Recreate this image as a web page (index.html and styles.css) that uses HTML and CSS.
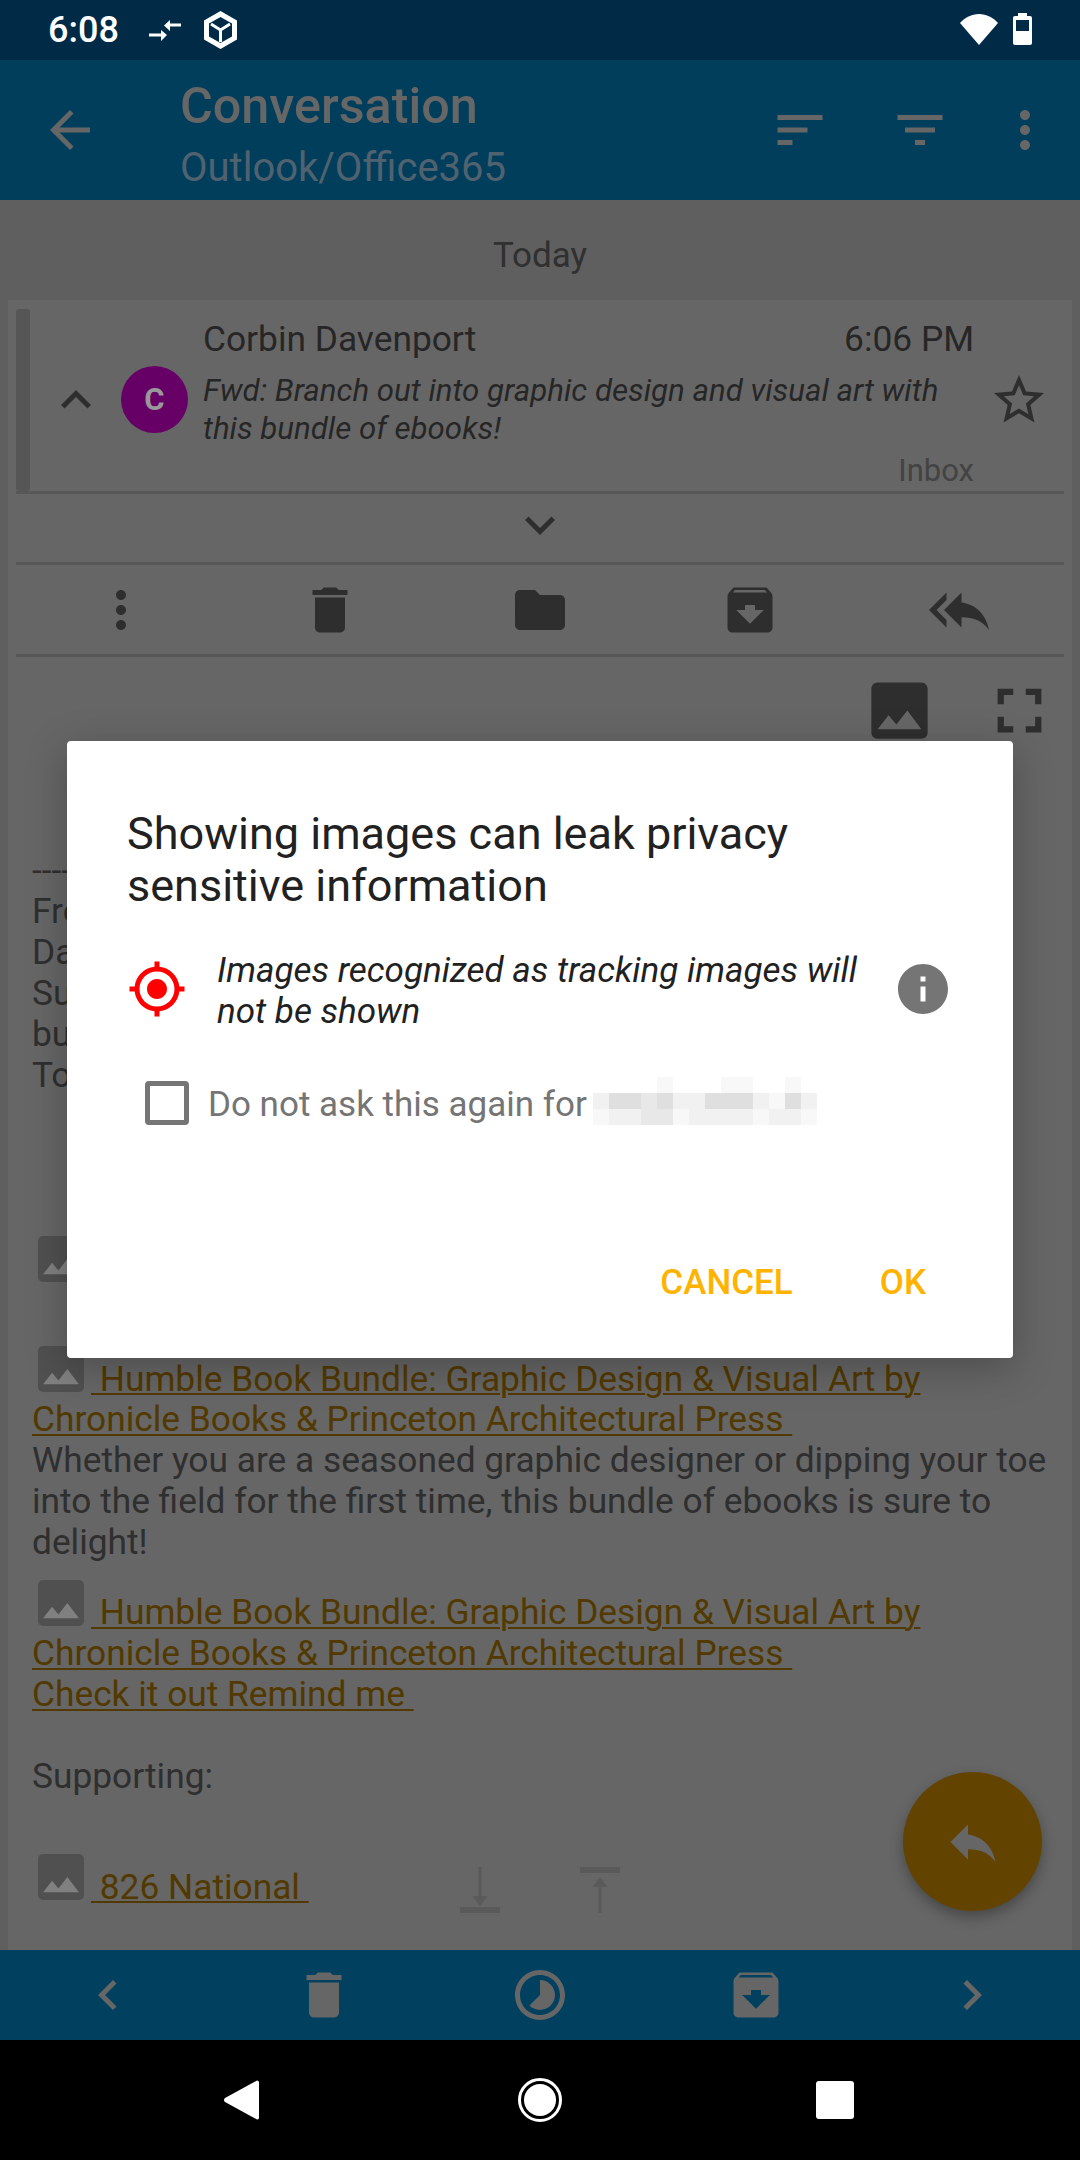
FILE: index.html
```html
<!DOCTYPE html>
<html lang="en">
<head>
  <meta charset="UTF-8">
  <meta name="viewport" content="width=device-width, initial-scale=1.0">
  <title>Conversation</title>
  <link rel="stylesheet" href="styles.css">
</head>
<body>

  <div class="screen">

    <div class="status-bar">
      <span class="clock">6:08</span>
      <svg class="st-arrows" viewBox="0 0 32 21"><path d="M0 13.500h12V10l6 5-6 6v-4.500H0zM32 3.500H21V0l-6 5.500 6 5.500V6.500h11z"/></svg>
      <svg class="st-hex" viewBox="0 0 33 38"><path d="M16.500 0L33 9.500v19L16.500 38 0 28.500v-19z"/><path class="hole" d="M16.500 6L28 12.500v13L16.500 32 5 25.500v-13z"/><path class="hex-lines" d="M7 13l9.500 6L26 13M16.500 19v12"/></svg>
      <span class="status-gap"></span>
      <svg class="st-wifi" viewBox="0 0 38 31"><path d="M19 31L0 9C5 3.500 11.500 0 19 0s14 3.500 19 9z"/></svg>
      <svg class="st-battery" viewBox="0 0 19 32"><path fill-rule="evenodd" d="M5 0h9v3h3a2 2 0 0 1 2 2v25a2 2 0 0 1-2 2H2a2 2 0 0 1-2-2V5a2 2 0 0 1 2-2h3zM3 7v11h13V7z"/></svg>
    </div>

    <div class="toolbar">
      <svg class="ico back" viewBox="0 0 24 24"><path d="M20 11H7.830l5.590-5.590L12 4l-8 8 8 8 1.410-1.410L7.830 13H20v-2z"/></svg>
      <div class="toolbar-title">
        <div class="title">Conversation</div>
        <div class="subtitle">Outlook/Office365</div>
      </div>
      <svg class="ico tb-sort" viewBox="0 0 24 24"><path d="M3 18h6v-2H3v2zM3 6v2h18V6H3zm0 7h12v-2H3v2z"/></svg>
      <svg class="ico tb-filter" viewBox="0 0 24 24"><path d="M10 18h4v-2h-4v2zM3 6v2h18V6H3zm3 7h12v-2H6v2z"/></svg>
      <svg class="ico tb-more" viewBox="0 0 24 24"><path d="M12 8c1.100 0 2-.9 2-2s-.9-2-2-2-2 .9-2 2 .9 2 2 2zm0 2c-1.100 0-2 .9-2 2s.9 2 2 2 2-.9 2-2-.9-2-2-2zm0 6c-1.100 0-2 .9-2 2s.9 2 2 2 2-.9 2-2-.9-2-2-2z"/></svg>
    </div>

    <div class="main">
      <div class="day">Today</div>

      <div class="card">
        <div class="msg-head">
          <div class="stripe"></div>
          <svg class="ico dark collapse" viewBox="0 0 24 24"><path d="M12 8l-6 6 1.410 1.410L12 10.830l4.590 4.580L18 14z"/></svg>
          <div class="avatar">C</div>
          <div class="msg-info">
            <div class="msg-top">
              <span class="sender">Corbin Davenport</span>
              <span class="time">6:06 PM</span>
            </div>
            <div class="subject">Fwd: Branch out into graphic design and visual art with this bundle of ebooks!</div>
            <div class="folder-name">Inbox</div>
          </div>
          <svg class="ico dark star" viewBox="0 0 24 24"><path d="M22 9.240l-7.190-.62L12 2 9.190 8.630 2 9.240l5.460 4.730L5.820 21 12 17.270 18.180 21l-1.630-7.030L22 9.240zM12 15.400l-3.760 2.270 1-4.280-3.320-2.880 4.380-.38L12 6.100l1.710 4.040 4.380.38-3.320 2.880 1 4.280L12 15.400z"/></svg>
        </div>
        <div class="divider"></div>

        <div class="expand-row">
          <svg class="ico dark" viewBox="0 0 24 24"><path d="M16.590 8.590L12 13.170 7.410 8.590 6 10l6 6 6-6z"/></svg>
        </div>
        <div class="divider"></div>

        <div class="action-row">
          <svg class="ico dark" viewBox="0 0 24 24"><path d="M12 8c1.100 0 2-.9 2-2s-.9-2-2-2-2 .9-2 2 .9 2 2 2zm0 2c-1.100 0-2 .9-2 2s.9 2 2 2 2-.9 2-2-.9-2-2-2zm0 6c-1.100 0-2 .9-2 2s.9 2 2 2 2-.9 2-2-.9-2-2-2z"/></svg>
          <svg class="ico dark" viewBox="0 0 24 24"><path d="M6 19c0 1.100.9 2 2 2h8c1.100 0 2-.9 2-2V7H6v12zM19 4h-3.500l-1-1h-5l-1 1H5v2h14V4z"/></svg>
          <svg class="ico dark" viewBox="0 0 24 24"><path d="M10 4H4c-1.100 0-1.990.9-1.990 2L2 18c0 1.100.9 2 2 2h16c1.100 0 2-.9 2-2V8c0-1.100-.9-2-2-2h-8l-2-2z"/></svg>
          <svg class="ico dark" viewBox="0 0 24 24"><path d="M20.540 5.230l-1.390-1.680C18.880 3.210 18.470 3 18 3H6c-.47 0-.88.21-1.160.55L3.460 5.230C3.170 5.570 3 6.020 3 6.500V19c0 1.100.9 2 2 2h14c1.100 0 2-.9 2-2V6.500c0-.48-.17-.93-.46-1.270zM12 17.500L6.500 12H10v-2h4v2h3.500L12 17.500zM5.120 5l.81-1h12l.94 1H5.120z"/></svg>
          <svg class="ico dark" viewBox="0 0 24 24"><path d="M7 8V5l-7 7 7 7v-3l-4-4 4-4zm6 1V5l-7 7 7 7v-4.100c5 0 8.500 1.600 11 5.100-1-5-4-10-11-11z"/></svg>
        </div>
        <div class="divider"></div>

        <div class="image-row">
          <svg class="ico dark big" viewBox="0 0 24 24"><path d="M21 19V5c0-1.100-.9-2-2-2H5c-1.100 0-2 .9-2 2v14c0 1.100.9 2 2 2h14c1.100 0 2-.9 2-2zM8.500 13.500l2.500 3.010L14.500 12l4.500 6H5l3.500-4.500z"/></svg>
          <svg class="ico dark big" viewBox="0 0 24 24"><path d="M7 14H5v5h5v-2H7v-3zm-2-4h2V7h3V5H5v5zm12 7h-3v2h5v-5h-2v3zM14 5v2h3v3h2V5h-5z"/></svg>
        </div>

        <div class="msg-body">
          ------<br>
          From:<br>
          Date:<br>
          Subject:<br>
          bundle<br>
          To:<br>
          <br><br><br>
          <svg class="thumb" viewBox="3 3 18 18"><rect class="thumb-bg" x="3" y="3" width="18" height="18" rx="2"/><path class="thumb-pic" d="M8.500 13.500l2.500 3.010L14.500 12l4.500 6H5z"/></svg><br>
          <br>
          <svg class="thumb" viewBox="3 3 18 18"><rect class="thumb-bg" x="3" y="3" width="18" height="18" rx="2"/><path class="thumb-pic" d="M8.500 13.500l2.500 3.010L14.500 12l4.500 6H5z"/></svg><a href="#">&nbsp;Humble Book Bundle: Graphic Design &amp; Visual Art by Chronicle Books &amp; Princeton Architectural Press&nbsp;</a><br>
          Whether you are a seasoned graphic designer or dipping your toe into the field for the first time, this bundle of ebooks is sure to delight!<br>
          <svg class="thumb" viewBox="3 3 18 18"><rect class="thumb-bg" x="3" y="3" width="18" height="18" rx="2"/><path class="thumb-pic" d="M8.500 13.500l2.500 3.010L14.500 12l4.500 6H5z"/></svg><a href="#">&nbsp;Humble Book Bundle: Graphic Design &amp; Visual Art by Chronicle Books &amp; Princeton Architectural Press&nbsp;</a><br>
          <a href="#">Check it out Remind me&nbsp;</a><br>
          <br>
          Supporting:<br>
          <br>
          <svg class="thumb" viewBox="3 3 18 18"><rect class="thumb-bg" x="3" y="3" width="18" height="18" rx="2"/><path class="thumb-pic" d="M8.500 13.500l2.500 3.010L14.500 12l4.500 6H5z"/></svg><a href="#">&nbsp;826 National&nbsp;</a>
        </div>
      </div>

      <svg class="scroll-btn to-bottom" viewBox="0 0 40 46"><path d="M18.500 0h3v29h6L20 39l-7.500-10h6zM0 40h40v6H0z"/></svg>
      <svg class="scroll-btn to-top" viewBox="0 0 40 46"><path d="M0 0h40v6H0zM20 10l7.500 10h-6v26h-3V20h-6z"/></svg>

      <div class="fab">
        <svg class="ico" viewBox="0 0 24 24"><path d="M10 9V5l-7 7 7 7v-4.100c5 0 8.500 1.600 11 5.100-1-5-4-10-11-11z"/></svg>
      </div>
    </div>

    <div class="bottom-bar">
      <svg class="ico" viewBox="0 0 24 24"><path d="M15.410 7.410L14 6l-6 6 6 6 1.410-1.410L10.830 12z"/></svg>
      <svg class="ico" viewBox="0 0 24 24"><path d="M6 19c0 1.100.9 2 2 2h8c1.100 0 2-.9 2-2V7H6v12zM19 4h-3.500l-1-1h-5l-1 1H5v2h14V4z"/></svg>
      <svg class="ico" viewBox="0 0 24 24"><path d="M16.240 7.760C15.070 6.590 13.540 6 12 6v6l-4.240 4.240c2.340 2.340 6.140 2.340 8.490 0 2.340-2.340 2.340-6.140-.01-8.480zM12 2C6.480 2 2 6.480 2 12s4.480 10 10 10 10-4.480 10-10S17.520 2 12 2zm0 18c-4.420 0-8-3.580-8-8s3.580-8 8-8 8 3.580 8 8-3.580 8-8 8z"/></svg>
      <svg class="ico" viewBox="0 0 24 24"><path d="M20.540 5.230l-1.390-1.680C18.880 3.210 18.470 3 18 3H6c-.47 0-.88.21-1.160.55L3.460 5.230C3.170 5.570 3 6.020 3 6.500V19c0 1.100.9 2 2 2h14c1.100 0 2-.9 2-2V6.500c0-.48-.17-.93-.46-1.270zM12 17.500L6.500 12H10v-2h4v2h3.500L12 17.500zM5.120 5l.81-1h12l.94 1H5.120z"/></svg>
      <svg class="ico" viewBox="0 0 24 24"><path d="M10 6L8.590 7.410 13.170 12l-4.580 4.590L10 18l6-6z"/></svg>
    </div>

    <div class="nav-bar">
      <svg class="nav-back" viewBox="0 0 35 40"><path d="M33 0.500a2 2 0 0 1 2 1.500v36a2 2 0 0 1-2 1.500L1 22a2.500 2.500 0 0 1 0-4z"/></svg>
      <div class="nav-home"><div class="nav-home-dot"></div></div>
      <div class="nav-recent"></div>
    </div>

    <!-- dialog -->
    <div class="dialog">
      <div class="dialog-title">Showing images can leak privacy sensitive information</div>
      <div class="dialog-row">
        <svg class="ico target" viewBox="0 0 24 24"><path d="M12 8c-2.210 0-4 1.790-4 4s1.790 4 4 4 4-1.790 4-4-1.790-4-4-4zm8.940 3c-.46-4.170-3.770-7.480-7.940-7.940V1h-2v2.060C6.830 3.520 3.520 6.830 3.060 11H1v2h2.060c.46 4.170 3.770 7.480 7.940 7.940V23h2v-2.060c4.170-.46 7.480-3.770 7.940-7.940H23v-2h-2.060zM12 19c-3.870 0-7-3.130-7-7s3.130-7 7-7 7 3.130 7 7-3.130 7-7 7z"/></svg>
        <div class="dialog-note">Images recognized as tracking images will not be shown</div>
        <svg class="ico info" viewBox="0 0 24 24"><path d="M12 2C6.480 2 2 6.480 2 12s4.480 10 10 10 10-4.480 10-10S17.520 2 12 2zm1 15h-2v-6h2v6zm0-8h-2V7h2v2z"/></svg>
      </div>
      <div class="dialog-check">
        <div class="checkbox"></div>
        <span class="check-label">Do not ask this again for</span>
        <div class="redacted">
          <i></i><i></i><i></i><i></i><i class="s1"></i><i></i><i></i><i></i><i class="s1"></i><i class="s1"></i><i></i><i></i><i class="s1"></i><i></i>
          <i class="s2"></i><i class="s4"></i><i class="s4"></i><i class="s3"></i><i class="s4"></i><i class="s2"></i><i class="s2"></i><i class="s4"></i><i class="s4"></i><i class="s4"></i><i class="s2"></i><i class="s1"></i><i class="s4"></i><i class="s2"></i>
          <i class="s1"></i><i class="s2"></i><i class="s2"></i><i class="s3"></i><i class="s3"></i><i class="s1"></i><i class="s2"></i><i class="s2"></i><i class="s2"></i><i class="s2"></i><i class="s1"></i><i class="s2"></i><i class="s2"></i><i class="s1"></i>
        </div>
      </div>
      <div class="dialog-buttons">
        <span class="btn">CANCEL</span>
        <span class="btn">OK</span>
      </div>
    </div>

  </div>

</body>
</html>
```

FILE: styles.css
```css
* {
  box-sizing: border-box;
}

html, body {
  margin: 0;
  padding: 0;
}

body {
  font-family: Roboto, "Liberation Sans", sans-serif;
  background-color: #000;
}

.screen {
  position: relative;
  width: 1080px;
  height: 2160px;
  display: flex;
  flex-direction: column;
  overflow: hidden;
}

.ico {
  display: block;
  width: 60px;
  height: 60px;
  flex: none;
  fill: #666;
}

.ico.dark {
  fill: #2e2e2e;
}

.ico.big {
  width: 75px;
  height: 75px;
}

/* status bar */
.status-bar {
  height: 60px;
  flex: none;
  display: flex;
  align-items: center;
  background-color: #012a47;
  padding-left: 48px;
  padding-right: 48px;
}

.status-bar svg {
  display: block;
  fill: #fff;
  flex: none;
}

.clock {
  width: 101px;
  color: #fff;
  font-size: 36px;
  font-weight: 500;
  line-height: 60px;
}

.st-arrows {
  width: 32px;
  height: 21px;
  margin-top: 1px;
}

.st-hex {
  width: 33px;
  height: 38px;
  margin-left: 23px;
}

.st-hex .hole {
  fill: #012a47;
}

.st-hex .hex-lines {
  fill: none;
  stroke: #fff;
  stroke-width: 3;
}

.status-gap {
  flex: 1;
}

.st-wifi {
  width: 38px;
  height: 31px;
  margin-top: -2px;
}

.st-battery {
  width: 19px;
  height: 32px;
  margin-left: 15px;
  margin-top: -2px;
}

/* toolbar */
.toolbar {
  height: 140px;
  flex: none;
  display: flex;
  align-items: center;
  background-color: #013e5c;
}

.back {
  margin-left: 40px;
}

.toolbar-title {
  flex: 1;
  align-self: flex-start;
  margin-left: 80px;
  padding-top: 18px;
}

.title {
  color: #666;
  font-size: 50.300px;
  font-weight: 500;
  line-height: 56px;
}

.subtitle {
  color: #50626f;
  font-size: 40px;
  line-height: 48px;
  margin-top: 10px;
}

.tb-filter {
  margin-left: 60px;
}

.tb-more {
  margin-left: 45px;
  margin-right: 25px;
}

/* main area */
.main {
  position: relative;
  flex: 1;
  background-color: #5f5f5f;
  overflow: hidden;
}

.day {
  height: 100px;
  color: #303030;
  font-size: 35px;
  line-height: 112px;
  text-align: center;
}

.card {
  margin: 0 8px;
  height: 1650px;
  background-color: #666;
  padding: 8px 8px 0;
}

.msg-head {
  display: flex;
  align-items: center;
  height: 183px;
}

.stripe {
  width: 14px;
  height: 182px;
  flex: none;
  background-color: #565656;
  border-radius: 3px;
}

.collapse {
  margin-left: 16px;
}

.avatar {
  width: 67px;
  height: 67px;
  flex: none;
  margin-left: 15px;
  border-radius: 50%;
  background-color: #660066;
  color: #999;
  font-size: 31px;
  font-weight: 700;
  line-height: 67px;
  text-align: center;
}

.msg-info {
  width: 771px;
  flex: none;
  align-self: flex-start;
  margin-left: 15px;
  padding-top: 10px;
  color: #262626;
}

.msg-top {
  display: flex;
  justify-content: space-between;
  font-size: 35.300px;
  line-height: 42px;
}

.subject {
  font-size: 31.250px;
  font-style: italic;
  line-height: 38px;
  margin-top: 12px;
}

.folder-name {
  color: #434343;
  font-size: 31px;
  line-height: 36px;
  text-align: right;
  margin-top: 5px;
}

.star {
  margin-left: 15px;
}

.divider {
  height: 3px;
  background-color: #575757;
}

.expand-row {
  height: 68px;
  display: flex;
  align-items: center;
  justify-content: center;
  padding-bottom: 7px;
}

.action-row {
  height: 89px;
  display: grid;
  grid-template-columns: repeat(5, 1fr);
  align-items: center;
  justify-items: center;
}

.image-row {
  height: 106px;
  display: flex;
  align-items: center;
  justify-content: flex-end;
  gap: 45px;
  padding-right: 7px;
}

/* message text */
.msg-body {
  margin-top: 87px;
  padding-left: 16px;
  padding-right: 8px;
  color: #2f2f2f;
  font-size: 35.300px;
  line-height: 41px;
}

.msg-body a {
  color: #523900;
  text-decoration: underline;
  text-decoration-thickness: 2px;
  text-underline-offset: 3px;
}

.thumb {
  display: inline-block;
  width: 46px;
  height: 46px;
  margin: 16.500px 7px 0 6px;
  vertical-align: -2px;
}

.thumb-bg {
  fill: #505050;
}

.thumb-pic {
  fill: #808080;
}

/* floating over the text */
.scroll-btn {
  position: absolute;
  top: 1667px;
  width: 40px;
  height: 46px;
  fill: #5a5a5a;
}

.to-bottom {
  left: 460px;
}

.to-top {
  left: 580px;
}

.fab {
  position: absolute;
  left: 903px;
  top: 1572px;
  width: 139px;
  height: 139px;
  border-radius: 50%;
  background-color: #624400;
  box-shadow: 0 6px 14px rgba(0, 0, 0, 0.3);
  display: flex;
  align-items: center;
  justify-content: center;
}

/* bottom bar */
.bottom-bar {
  height: 90px;
  flex: none;
  display: grid;
  grid-template-columns: repeat(5, 1fr);
  align-items: center;
  justify-items: center;
  background-color: #01405e;
}

/* navigation */
.nav-bar {
  height: 120px;
  flex: none;
  position: relative;
  background-color: #000;
  display: grid;
  grid-template-columns: 480px 120px 480px;
  align-items: center;
}

.nav-back {
  display: block;
  width: 35px;
  height: 40px;
  fill: #fff;
  justify-self: end;
  margin-right: 221px;
}

.nav-home {
  width: 44px;
  height: 44px;
  justify-self: center;
  border: 3px solid #fff;
  border-radius: 50%;
  padding: 3px;
}

.nav-home-dot {
  width: 100%;
  height: 100%;
  border-radius: 50%;
  background-color: #fff;
}

.nav-recent {
  width: 38px;
  height: 38px;
  margin-left: 216px;
  border-radius: 3px;
  background-color: #fff;
}

/* dialog */
.dialog {
  position: absolute;
  left: 67px;
  top: 741px;
  width: 946px;
  height: 617px;
  background-color: #fff;
  border-radius: 4px;
  box-shadow: 0 10px 40px rgba(0, 0, 0, 0.25);
  padding: 67px 60px 0;
  display: flex;
  flex-direction: column;
}

.dialog-title {
  max-width: 780px;
  color: #212121;
  font-size: 45px;
  line-height: 52px;
}

.dialog-row {
  display: flex;
  align-items: center;
  margin-top: 34px;
}

.target {
  fill: #f00;
}

.dialog-note {
  width: 660px;
  margin-left: 30px;
  margin-top: 4px;
  color: #212121;
  font-size: 35px;
  font-style: italic;
  line-height: 41px;
}

.info {
  margin-left: 16px;
  fill: #757575;
}

.dialog-check {
  display: flex;
  align-items: flex-start;
  margin-top: 45px;
  margin-left: 18px;
}

.checkbox {
  width: 44px;
  height: 44px;
  flex: none;
  margin-top: 4px;
  border: 5px solid #757575;
  border-radius: 4px;
}

.check-label {
  margin-left: 19px;
  margin-top: 4px;
  color: #757575;
  font-size: 35px;
  line-height: 48px;
}

.redacted {
  width: 224px;
  height: 48px;
  margin-left: 6px;
  display: grid;
  grid-template-columns: repeat(14, 16px);
  grid-auto-rows: 16px;
}

.redacted .s1 {
  background-color: #f8f8f8;
}

.redacted .s2 {
  background-color: #f1f1f1;
}

.redacted .s3 {
  background-color: #e8e8e8;
}

.redacted .s4 {
  background-color: #dfdfdf;
}

.dialog-buttons {
  display: flex;
  justify-content: flex-end;
  gap: 87px;
  margin-top: auto;
  margin-bottom: 55px;
  margin-right: 27px;
}

.btn {
  color: #ffb300;
  font-size: 35px;
  font-weight: 500;
  line-height: 40px;
}
```
